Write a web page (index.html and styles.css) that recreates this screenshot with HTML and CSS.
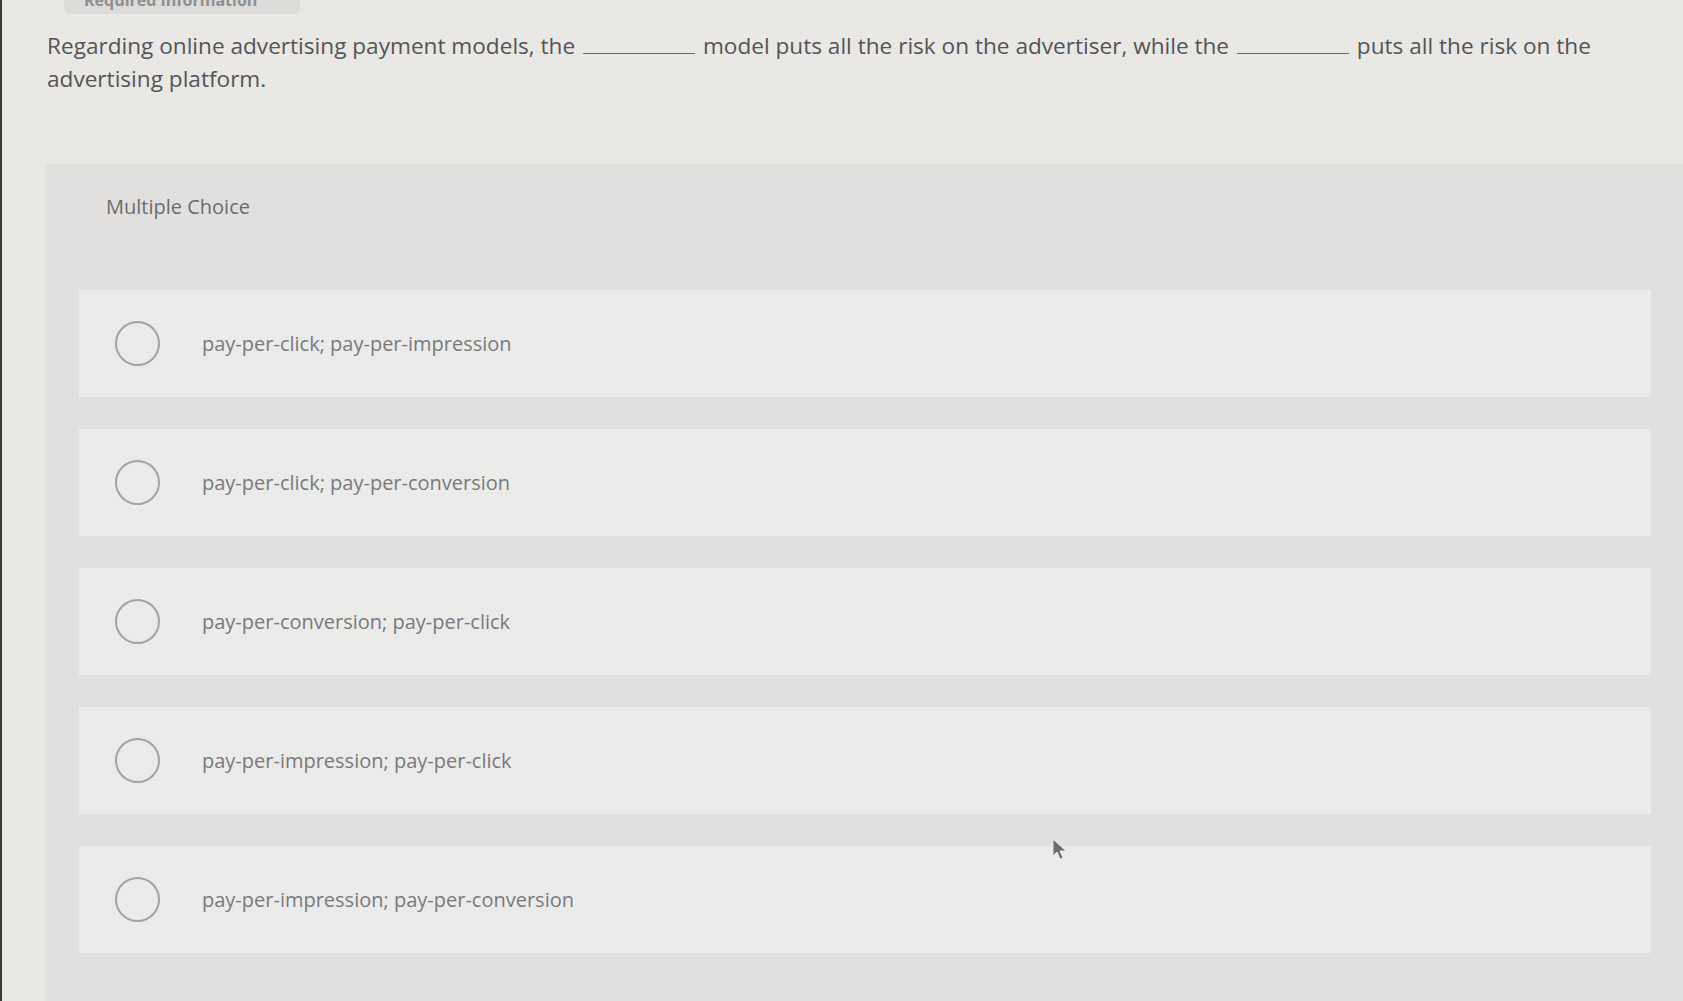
FILE: index.html
```html
<!DOCTYPE html>
<html lang="en">
<head>
<meta charset="utf-8">
<title>Multiple Choice</title>
<link rel="stylesheet" href="styles.css">
</head>
<body>
<div class="screen">
  <div class="tabbar">
    <div class="tab">Required Information</div>
  </div>
  <div class="question">
    Regarding online advertising payment models, the <span class="blank"></span> model puts all the risk on the advertiser, while the <span class="blank"></span> puts all the risk on the advertising platform.
  </div>
  <div class="panel">
    <div class="panel-title">Multiple Choice</div>
    <div class="options">
      <div class="option"><span class="radio"></span><span class="label">pay-per-click; pay-per-impression</span></div>
      <div class="option"><span class="radio"></span><span class="label">pay-per-click; pay-per-conversion</span></div>
      <div class="option"><span class="radio"></span><span class="label">pay-per-conversion; pay-per-click</span></div>
      <div class="option"><span class="radio"></span><span class="label">pay-per-impression; pay-per-click</span></div>
      <div class="option"><span class="radio"></span><span class="label">pay-per-impression; pay-per-conversion</span></div>
    </div>
  </div>
  <svg class="cursor" width="16" height="24" viewBox="0 0 16 24"><path d="M1 1 L1 18 L5 14 L8 21 L11 20 L8 13 L14 13 Z" fill="#6d6d70" stroke="#e8e8e8" stroke-width="1"/></svg>
</div>
</body>
</html>
```
FILE: styles.css
```css
html, body {
  margin: 0;
  padding: 0;
  height: 100%;
  overflow: hidden;
}
body {
  background: #e9e8e5;
  font-family: "Open Sans", Lato, Arial, sans-serif;
}
.screen {
  position: relative;
  height: 100%;
  border-left: 2px solid #3a3a3c;
  box-sizing: border-box;
  display: flex;
  flex-direction: column;
  overflow: hidden;
}
.tabbar {
  flex: none;
  height: 20px;
  padding-left: 62px;
}
.tab {
  width: 236px;
  height: 20px;
  margin-top: -6px;
  background: #dcdcdb;
  border-radius: 0 0 6px 6px;
  color: #8f8f92;
  font-weight: 700;
  font-size: 16px;
  line-height: 12px;
  text-indent: 20px;
  overflow: hidden;
  white-space: nowrap;
}
.question {
  flex: none;
  margin: 9px 36px 0 45px;
  font-size: 22.6px;
  line-height: 33px;
  color: #555557;
  min-height: 96px;
}
.blank {
  display: inline-block;
  width: 112px;
  height: 1px;
  background: #6a6a6c;
  vertical-align: baseline;
  margin: 0 2px;
}
.panel {
  flex: 1;
  margin-left: 43px;
  margin-top: 39px;
  background: #e1e0de;
  padding: 30px 32px 0 34px;
}
.panel-title {
  padding-left: 27px;
  color: #6c6c6f;
  font-size: 20px;
  line-height: 26px;
}
.options {
  margin-top: 70px;
  display: flex;
  flex-direction: column;
  gap: 32px;
}
.option {
  background: #ebebea;
  height: 107px;
  display: flex;
  align-items: center;
  padding-left: 36px;
  gap: 42px;
}
.radio {
  flex: none;
  width: 45px;
  height: 45px;
  border: 2px solid #a3a3a8;
  border-radius: 50%;
  box-sizing: border-box;
}
.label {
  color: #7a7a7d;
  font-size: 20px;
}
.cursor {
  position: absolute;
  left: 1050px;
  top: 838px;
}
```
